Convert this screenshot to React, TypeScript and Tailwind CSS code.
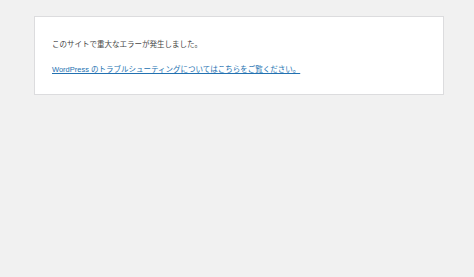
import React from "react";

function App() {
  return (
    <div className="min-h-[277px] w-full bg-[#f1f1f1] pt-4 font-['Liberation_Sans','Noto_Sans_CJK_JP',sans-serif]">
      <div className="ml-[34px] w-[410px] h-[79px] border border-[#dcdcde] bg-white px-[17px] pt-[22px] text-[7.5px] leading-[12px] text-[#444]">
        <p>このサイトで重大なエラーが発生しました。</p>
        <p className="mt-[13px]">
          <a href="#" className="text-[#2271b1] underline">
            WordPress のトラブルシューティングについてはこちらをご覧ください。
          </a>
        </p>
      </div>
    </div>
  );
}

export default App;
